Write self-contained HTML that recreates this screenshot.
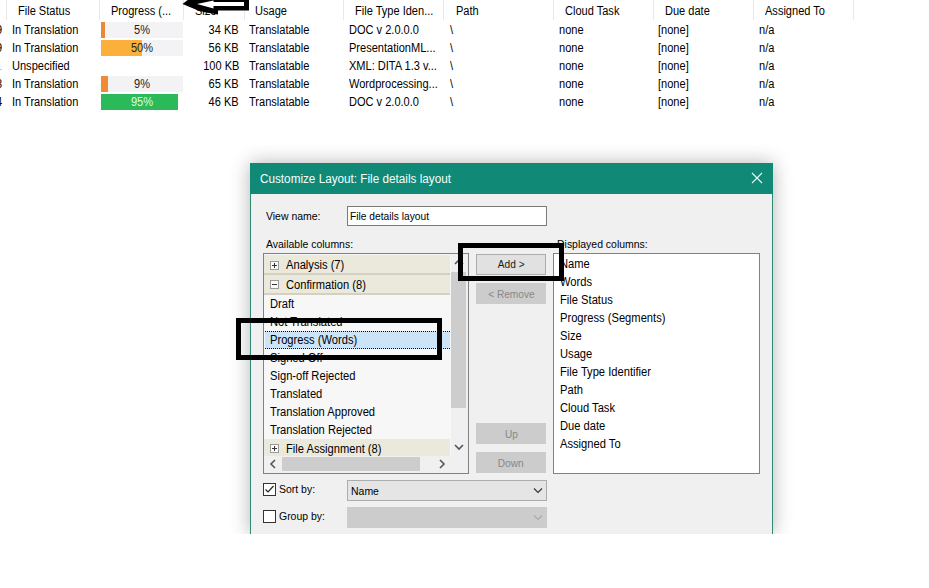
<!DOCTYPE html>
<html><head><meta charset="utf-8">
<style>
*{box-sizing:border-box;margin:0;padding:0}
html,body{width:929px;height:588px;overflow:hidden;background:#fff;position:relative;font-family:"Liberation Sans",sans-serif;color:#000}
.a{position:absolute;white-space:nowrap}
.t{font-size:12px;line-height:14px;color:#000;transform:scaleX(.92);transform-origin:0 0}
.vd{position:absolute;top:0;width:1px;height:20px;background:#e8e8e8}
.pb{position:absolute;left:101px;width:82px;height:16px;background:#f3f3f5}
.pf{position:absolute;left:0;top:0;height:16px}
.pt{position:absolute;left:0;width:82px;top:1px;text-align:center;font-size:12px;line-height:14px;color:#222;transform:scaleX(.92)}
.dlg{position:absolute;left:250px;top:163px;width:523px;height:371px;background:#f0f0f0;border-left:1px solid #2f8a7a;border-right:1px solid #2f8a7a;box-shadow:0 0 18px rgba(0,0,0,0.3);clip-path:inset(-30px -30px 0 -30px)}
.d{font-size:12px;line-height:14px;color:#000;transform:scaleX(.93);transform-origin:0 0}
.l{font-size:11.5px;line-height:14px;color:#000;transform:scaleX(.91);transform-origin:0 0}
.btn{position:absolute;left:225px;width:71px;height:21px;background:#cccccc;color:#8a8a8a;text-align:center;font-size:11.5px;line-height:19px}
.ann{position:absolute;border:5px solid #000}
</style></head><body>

<!-- top table -->
<div class="vd" style="left:6px"></div>
<div class="vd" style="left:99px"></div>
<div class="vd" style="left:183px"></div>
<div class="vd" style="left:244px"></div>
<div class="vd" style="left:343px"></div>
<div class="vd" style="left:443px"></div>
<div class="vd" style="left:553px"></div>
<div class="vd" style="left:653px"></div>
<div class="vd" style="left:753px"></div>
<div class="vd" style="left:853px"></div>

<div class="a t" style="left:18px;top:4px">File Status</div>
<div class="a t" style="left:111px;top:4px">Progress (...</div>
<div class="a t" style="left:195px;top:4px">Size</div>
<div class="a t" style="left:255px;top:4px">Usage</div>
<div class="a t" style="left:355px;top:4px">File Type Iden...</div>
<div class="a t" style="left:456px;top:4px">Path</div>
<div class="a t" style="left:565px;top:4px">Cloud Task</div>
<div class="a t" style="left:665px;top:4px">Due date</div>
<div class="a t" style="left:765px;top:4px">Assigned To</div>

<!-- rows -->
<div class="a t" style="left:-4px;top:23px">9</div>
<div class="a t" style="left:-4px;top:41px">9</div>
<div class="a t" style="left:-4px;top:59px;color:#b8c4cc">1</div>
<div class="a t" style="left:-4px;top:77px">3</div>
<div class="a t" style="left:-4px;top:95px">4</div>

<div class="a t" style="left:12px;top:23px">In Translation</div>
<div class="a t" style="left:12px;top:41px">In Translation</div>
<div class="a t" style="left:12px;top:59px">Unspecified</div>
<div class="a t" style="left:12px;top:77px">In Translation</div>
<div class="a t" style="left:12px;top:95px">In Translation</div>

<div class="pb" style="top:22px"><div class="pf" style="width:4px;background:#e8893a"></div><div class="pt">5%</div></div>
<div class="pb" style="top:40px"><div class="pf" style="width:41px;background:#fbb03b"></div><div class="pt">50%</div></div>
<div class="pb" style="top:76px"><div class="pf" style="width:7px;background:#f08a35"></div><div class="pt">9%</div></div>
<div class="pb" style="top:94px;background:#fff"><div class="pf" style="width:77px;background:#2bba5a"></div><div class="pt" style="color:#d8ffe0">95%</div></div>

<div class="a t" style="transform-origin:100% 0;right:690px;top:23px">34 KB</div>
<div class="a t" style="transform-origin:100% 0;right:690px;top:41px">56 KB</div>
<div class="a t" style="transform-origin:100% 0;right:690px;top:59px">100 KB</div>
<div class="a t" style="transform-origin:100% 0;right:690px;top:77px">65 KB</div>
<div class="a t" style="transform-origin:100% 0;right:690px;top:95px">46 KB</div>

<div class="a t" style="left:249px;top:23px">Translatable</div>
<div class="a t" style="left:249px;top:41px">Translatable</div>
<div class="a t" style="left:249px;top:59px">Translatable</div>
<div class="a t" style="left:249px;top:77px">Translatable</div>
<div class="a t" style="left:249px;top:95px">Translatable</div>

<div class="a t" style="left:349px;top:23px">DOC v 2.0.0.0</div>
<div class="a t" style="left:349px;top:41px">PresentationML...</div>
<div class="a t" style="left:349px;top:59px">XML: DITA 1.3 v...</div>
<div class="a t" style="left:349px;top:77px">Wordprocessing...</div>
<div class="a t" style="left:349px;top:95px">DOC v 2.0.0.0</div>

<div class="a t" style="left:450px;top:23px">\</div>
<div class="a t" style="left:450px;top:41px">\</div>
<div class="a t" style="left:450px;top:59px">\</div>
<div class="a t" style="left:450px;top:77px">\</div>
<div class="a t" style="left:450px;top:95px">\</div>

<div class="a t" style="left:559px;top:23px">none</div>
<div class="a t" style="left:559px;top:41px">none</div>
<div class="a t" style="left:559px;top:59px">none</div>
<div class="a t" style="left:559px;top:77px">none</div>
<div class="a t" style="left:559px;top:95px">none</div>

<div class="a t" style="left:658px;top:23px">[none]</div>
<div class="a t" style="left:658px;top:41px">[none]</div>
<div class="a t" style="left:658px;top:59px">[none]</div>
<div class="a t" style="left:658px;top:77px">[none]</div>
<div class="a t" style="left:658px;top:95px">[none]</div>

<div class="a t" style="left:759px;top:23px">n/a</div>
<div class="a t" style="left:759px;top:41px">n/a</div>
<div class="a t" style="left:759px;top:59px">n/a</div>
<div class="a t" style="left:759px;top:77px">n/a</div>
<div class="a t" style="left:759px;top:95px">n/a</div>

<!-- DIALOG -->
<div class="dlg"></div>
<!-- title bar -->
<div class="a" style="left:250px;top:163px;width:523px;height:31px;background:#118977"></div>
<div class="a" style="left:260px;top:172px;font-size:12px;line-height:14px;color:#f4fffc;transform:scaleX(.977);transform-origin:0 0">Customize Layout: File details layout</div>
<svg class="a" style="left:751px;top:172px" width="12" height="12" viewBox="0 0 12 12"><path d="M1 1L11 11M11 1L1 11" stroke="#e8fff8" stroke-width="1.1"/></svg>

<div class="a l" style="left:266px;top:209px">View name:</div>
<div class="a" style="left:347px;top:206px;width:200px;height:20px;background:#fff;border:1px solid #7a7a7a"></div>
<div class="a l" style="left:350px;top:209px;transform:scaleX(.89)">File details layout</div>

<div class="a l" style="left:266px;top:237px">Available columns:</div>
<div class="a l" style="left:557px;top:237px">Displayed columns:</div>

<!-- left list -->
<div class="a" style="left:263px;top:253px;width:206px;height:221px;background:#f0f0f0;border:1px solid #828282"></div>
<div class="a" style="left:264px;top:254px;width:187px;height:202px;background:#f7f7f7"></div>
<div class="a" style="left:264px;top:255px;width:186px;height:20px;background:#ebe9db;border-bottom:2px solid #d5d1c0"></div>
<div class="a" style="left:264px;top:275px;width:186px;height:20px;background:#ebe9db;border-bottom:2px solid #d5d1c0"></div>
<div class="a" style="left:264px;top:439px;width:186px;height:17px;background:#ebe9db"></div>
<div class="a" style="left:270px;top:261px;width:9px;height:9px;border:1px solid #9a9a9a;background:#fafafa"></div>
<div class="a" style="left:272px;top:265px;width:5px;height:1px;background:#333"></div>
<div class="a" style="left:274px;top:263px;width:1px;height:5px;background:#333"></div>
<div class="a" style="left:270px;top:280px;width:9px;height:9px;border:1px solid #9a9a9a;background:#fafafa"></div>
<div class="a" style="left:272px;top:284px;width:5px;height:1px;background:#333"></div>
<div class="a" style="left:270px;top:444px;width:9px;height:9px;border:1px solid #9a9a9a;background:#fafafa"></div>
<div class="a" style="left:272px;top:448px;width:5px;height:1px;background:#333"></div>
<div class="a" style="left:274px;top:446px;width:1px;height:5px;background:#333"></div>
<div class="a d" style="left:286px;top:258px">Analysis (7)</div>
<div class="a d" style="left:286px;top:278px">Confirmation (8)</div>
<div class="a d" style="left:286px;top:442px">File Assignment (8)</div>

<div class="a" style="left:265px;top:331px;width:185px;height:18px;background:#cce4f7;border-top:1px dotted #111;border-bottom:1px dotted #111"></div>
<div class="a d" style="left:270px;top:297px">Draft</div>
<div class="a d" style="left:270px;top:315px">Not Translated</div>
<div class="a d" style="left:270px;top:333px">Progress (Words)</div>
<div class="a d" style="left:270px;top:351px">Signed Off</div>
<div class="a d" style="left:270px;top:369px">Sign-off Rejected</div>
<div class="a d" style="left:270px;top:387px">Translated</div>
<div class="a d" style="left:270px;top:405px">Translation Approved</div>
<div class="a d" style="left:270px;top:423px">Translation Rejected</div>

<!-- v scrollbar -->
<div class="a" style="left:451px;top:272px;width:15px;height:136px;background:#cdcdcd"></div>
<svg class="a" style="left:454px;top:258px" width="10" height="8" viewBox="0 0 10 8"><path d="M1 6L5 2L9 6" stroke="#555" stroke-width="1.6" fill="none"/></svg>
<svg class="a" style="left:454px;top:443px" width="10" height="8" viewBox="0 0 10 8"><path d="M1 2L5 6L9 2" stroke="#555" stroke-width="1.6" fill="none"/></svg>
<!-- h scrollbar -->
<div class="a" style="left:282px;top:457px;width:138px;height:14px;background:#cdcdcd"></div>
<svg class="a" style="left:269px;top:459px" width="8" height="10" viewBox="0 0 8 10"><path d="M6 1L2 5L6 9" stroke="#555" stroke-width="1.6" fill="none"/></svg>
<svg class="a" style="left:438px;top:459px" width="8" height="10" viewBox="0 0 8 10"><path d="M2 1L6 5L2 9" stroke="#555" stroke-width="1.6" fill="none"/></svg>

<!-- buttons -->
<div class="a" style="left:476px;top:254px;width:70px;height:21px;background:#e1e1e1;border:1px solid #adadad;text-align:center;font-size:11.5px;line-height:19px;color:#1a1a1a"><span style="display:inline-block;transform:scaleX(.88)">Add &gt;</span></div>
<div class="a" style="left:476px;top:283px;width:70px;height:21px;background:#cccccc;text-align:center;font-size:11.5px;line-height:22px;color:#888"><span style="display:inline-block;transform:scaleX(.88)">&lt; Remove</span></div>
<div class="a" style="left:476px;top:423px;width:70px;height:21px;background:#cccccc;text-align:center;font-size:11.5px;line-height:22px;color:#888"><span style="display:inline-block;transform:scaleX(.88)">Up</span></div>
<div class="a" style="left:476px;top:452px;width:70px;height:21px;background:#cccccc;text-align:center;font-size:11.5px;line-height:22px;color:#888"><span style="display:inline-block;transform:scaleX(.88)">Down</span></div>

<!-- right list -->
<div class="a" style="left:553px;top:253px;width:207px;height:221px;background:#fff;border:1px solid #828282"></div>
<div class="a d" style="left:560px;top:257px">Name</div>
<div class="a d" style="left:560px;top:275px">Words</div>
<div class="a d" style="left:560px;top:293px">File Status</div>
<div class="a d" style="left:560px;top:311px">Progress (Segments)</div>
<div class="a d" style="left:560px;top:329px">Size</div>
<div class="a d" style="left:560px;top:347px">Usage</div>
<div class="a d" style="left:560px;top:365px">File Type Identifier</div>
<div class="a d" style="left:560px;top:383px">Path</div>
<div class="a d" style="left:560px;top:401px">Cloud Task</div>
<div class="a d" style="left:560px;top:419px">Due date</div>
<div class="a d" style="left:560px;top:437px">Assigned To</div>

<!-- sort / group -->
<div class="a" style="left:263px;top:483px;width:13px;height:13px;border:1px solid #333;background:#fff"></div>
<svg class="a" style="left:263px;top:483px" width="13" height="13" viewBox="0 0 13 13"><path d="M2.5 6.5L5 9L10.5 3" stroke="#222" stroke-width="1.2" fill="none"/></svg>
<div class="a l" style="left:279px;top:482px">Sort by:</div>
<div class="a" style="left:347px;top:480px;width:200px;height:21px;background:#e5e5e5;border:1px solid #acacac"></div>
<div class="a l" style="left:351px;top:484px">Name</div>
<svg class="a" style="left:533px;top:487px" width="10" height="7" viewBox="0 0 10 7"><path d="M1 1.5L5 5.5L9 1.5" stroke="#333" stroke-width="1.1" fill="none"/></svg>

<div class="a" style="left:263px;top:510px;width:13px;height:13px;border:1px solid #333;background:#fff"></div>
<div class="a l" style="left:279px;top:509px">Group by:</div>
<div class="a" style="left:347px;top:507px;width:200px;height:21px;background:#cccccc"></div>
<svg class="a" style="left:533px;top:514px" width="10" height="7" viewBox="0 0 10 7"><path d="M1 1.5L5 5.5L9 1.5" stroke="#aaa" stroke-width="1.1" fill="none"/></svg>

<!-- annotations -->
<div class="ann" style="left:458px;top:243px;width:106px;height:38px"></div>
<div class="ann" style="left:236px;top:318px;width:206px;height:42px"></div>
<svg class="a" style="left:0;top:0" width="260" height="20" viewBox="0 0 260 20"><path d="M182.5 4L189 -1L249 -1L249 10.5L218 10.5L218 14.5L206 12.5L197 10Z" fill="#000"/><path d="M197 4L213.5 0.5L213.5 2L244 2L244 6L213.5 6L213.5 8.5Z" fill="#fff"/></svg>


</body></html>
